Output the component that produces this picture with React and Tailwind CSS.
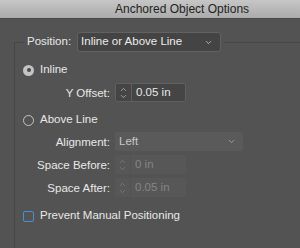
import { ChevronDown, ChevronUp } from "lucide-react";

function Stepper({ value, disabled }) {
  return (
    <div
      className={`flex h-[19px] w-[71px] items-stretch rounded-[2px] ${
        disabled ? "bg-[#575757]" : "border border-[#5f5f5f] bg-[#454545]"
      }`}
    >
      <div
        className={`flex w-[16px] flex-col items-center justify-center border-r ${
          disabled ? "border-[#535353] text-[#8a8a8a]" : "border-[#5f5f5f] text-[#d8d8d8]"
        }`}
      >
        <ChevronUp size={9} strokeWidth={1.6} className="-mb-[1px]" />
        <ChevronDown size={9} strokeWidth={1.6} className="-mt-[1px]" />
      </div>
      <div
        className={`flex items-center pl-[4px] text-[11.5px] ${
          disabled ? "text-[#858585]" : "text-[#e8e8e8]"
        }`}
      >
        {value}
      </div>
    </div>
  );
}

function FieldRow({ label, children, className }) {
  return (
    <div className={`-ml-[3px] flex h-[19px] items-center ${className}`}>
      <div className="w-[95px] pr-[5px] text-right text-[11.5px] leading-[18px] text-[#e8e8e8]">{label}</div>
      {children}
    </div>
  );
}

export default function App() {
  return (
    <div
      className="flex h-[248px] w-[300px] flex-col overflow-hidden bg-[#535353]"
      style={{ fontFamily: '"Liberation Sans", Arial, sans-serif' }}
    >
      <div className="flex h-[19px] shrink-0 items-center border-b border-[#4a4a4a] bg-gradient-to-b from-[#c6c6c6] to-[#ababab] pl-[115px] text-[12px] text-[#222]">
        Anchored Object Options
      </div>

      <div className="mt-[13px] flex h-[20px] items-stretch pl-[14px]">
        <div className="flex w-[10px] flex-col">
          <div className="h-[10px]" />
          <div className="flex-1 border-l border-t border-[#474747]" />
        </div>
        <div className="flex items-center pl-[3px] pr-[6px] text-[11.5px] text-[#e8e8e8]">Position:</div>
        <div className="flex w-[144px] items-center justify-between rounded-[3px] border border-[#626262] bg-[#444444] pl-[3px] pr-[7px] text-[11.5px] text-[#ececec]">
          <span>Inline or Above Line</span>
          <ChevronDown size={9} strokeWidth={2} className="text-[#d0d0d0]" />
        </div>
        <div className="ml-[2px] flex flex-1 flex-col">
          <div className="h-[10px]" />
          <div className="border-t border-[#474747]" />
        </div>
      </div>

      <div className="ml-[14px] flex flex-1 flex-col border-l border-[#474747] pl-[8px]">
        <div className="mt-[9px] flex h-[18px] items-center">
          <div className="flex h-[11px] w-[11px] items-center justify-center rounded-full bg-[#c4c4c4]">
            <div className="h-[4px] w-[4px] rounded-full bg-[#4a4a4a]" />
          </div>
          <span className="ml-[6px] text-[11.5px] text-[#e8e8e8]">Inline</span>
        </div>

        <FieldRow label="Y Offset:" className="mt-[4px]">
          <Stepper value="0.05 in" />
        </FieldRow>

        <div className="mt-[9px] flex h-[18px] items-center">
          <div className="h-[11px] w-[11px] rounded-full border border-[#c4c4c4]" />
          <span className="ml-[6px] text-[11.5px] text-[#e8e8e8]">Above Line</span>
        </div>

        <FieldRow label="Alignment:" className="mt-[3px]">
          <div className="flex h-[19px] w-[128px] items-center justify-between rounded-[3px] bg-[#5a5a5a] pl-[4px] pr-[7px] text-[11.5px] text-[#c8c8c8]">
            <span>Left</span>
            <ChevronDown size={9} strokeWidth={2} className="text-[#b0b0b0]" />
          </div>
        </FieldRow>

        <FieldRow label="Space Before:" className="mt-[4px]">
          <Stepper value="0 in" disabled />
        </FieldRow>

        <FieldRow label="Space After:" className="mt-[4px]">
          <Stepper value="0.05 in" disabled />
        </FieldRow>

        <div className="mt-[10px] flex h-[18px] items-center">
          <div className="h-[11px] w-[11px] rounded-[2px] border border-[#4a8fd6]" />
          <span className="ml-[6px] text-[11.5px] text-[#e8e8e8]">Prevent Manual Positioning</span>
        </div>
      </div>
    </div>
  );
}
